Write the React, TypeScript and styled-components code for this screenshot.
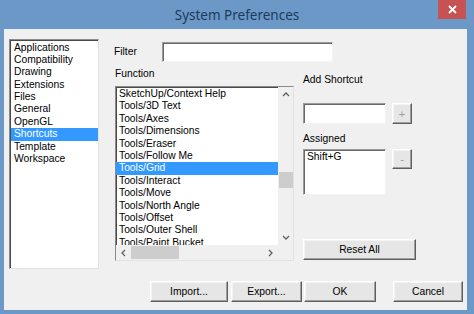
import styled, { createGlobalStyle } from "styled-components";

const GlobalStyle = createGlobalStyle`
  html, body {
    margin: 0;
    padding: 0;
  }
  body {
    width: 474px;
    height: 314px;
    overflow: hidden;
    background: #6b98c6;
    font-family: "Liberation Sans", Arial, sans-serif;
  }
`;

const Window = styled.div`
  width: 474px;
  height: 314px;
  display: flex;
  flex-direction: column;
  background: #6b98c6;
`;

const TitleBar = styled.div`
  position: relative;
  height: 29px;
  display: flex;
  align-items: center;
  justify-content: center;
  font-family: "Noto Sans", "Open Sans", sans-serif;
  font-size: 13.5px;
  color: #1d3a5c;
  padding-top: 1px;
  box-sizing: border-box;
`;

const CloseButton = styled.div`
  position: absolute;
  top: 0;
  right: 8px;
  width: 28px;
  height: 19px;
  background: #c75252;
  color: #fff;
  display: flex;
  align-items: center;
  justify-content: center;
`;

const Panel = styled.div`
  margin: 0 7px 4px 4px;
  height: 281px;
  background: #f0f0f0;
  border-top: 1px solid #e8eef5;
  box-sizing: border-box;
  display: flex;
  flex-direction: column;
  font-size: 10.3px;
  color: #000;
`;

const TopArea = styled.div`
  display: flex;
  padding: 9px 0 0 5px;
`;

const ListBox = styled.div<{ $w: number; $h: number }>`
  width: ${(p) => p.$w}px;
  height: ${(p) => p.$h}px;
  box-sizing: border-box;
  background: #fff;
  border-style: solid;
  border-width: 1px;
  border-color: #8a8a8a #e2e2e2 #e2e2e2 #8a8a8a;
  box-shadow: inset 1px 1px 0 #4a4a4a;
  overflow: hidden;
`;

const Item = styled.div<{ $selected?: boolean }>`
  height: 12.4px;
  line-height: 12.4px;
  padding-left: 3px;
  white-space: nowrap;
  background: ${(p) => (p.$selected ? "#3399ff" : "transparent")};
  color: ${(p) => (p.$selected ? "#fff" : "#000")};
`;

const Items = styled.div`
  padding-top: 1.5px;
  padding-left: 1px;
`;

const RightArea = styled.div`
  display: flex;
  flex-direction: column;
  margin-left: 15px;
`;

const FilterRow = styled.div`
  display: flex;
  align-items: center;
  margin-top: 3px;
  height: 20px;
`;

const Label = styled.div<{ $w?: number }>`
  width: ${(p) => (p.$w ? `${p.$w}px` : "auto")};
  height: 12px;
  line-height: 12px;
  white-space: nowrap;
`;

const TextBox = styled.div<{ $w: number; $h: number }>`
  width: ${(p) => p.$w}px;
  height: ${(p) => p.$h}px;
  box-sizing: border-box;
  background: #fff;
  border-style: solid;
  border-width: 1px;
  border-color: #9a9a9a #f4f4f4 #f4f4f4 #9a9a9a;
  box-shadow: inset 1px 1px 0 #6a6a6a;
  padding: 1px 3px;
  line-height: 12px;
`;

const LowerRow = styled.div`
  display: flex;
  margin-top: 6px;
`;

const FunctionCol = styled.div`
  display: flex;
  flex-direction: column;
  gap: 6px;
  margin-left: 1px;
`;

const FunctionList = styled(ListBox)`
  display: flex;
  flex-direction: column;
`;

const ListBody = styled.div`
  flex: 1;
  display: flex;
  min-height: 0;
`;

const ListItems = styled.div`
  flex: 1;
  overflow: hidden;
  padding-top: 1px;
`;

const VScroll = styled.div`
  width: 15px;
  background: #f0f0f0;
  display: flex;
  flex-direction: column;
  align-items: center;
`;

const HScroll = styled.div`
  height: 15px;
  display: flex;
  background: #f0f0f0;
`;

const HTrack = styled.div`
  flex: 1;
  display: flex;
  align-items: center;
`;

const ArrowCell = styled.div<{ $size: number }>`
  width: ${(p) => p.$size}px;
  height: ${(p) => p.$size}px;
  display: flex;
  align-items: center;
  justify-content: center;
  flex-shrink: 0;
`;

const Thumb = styled.div<{ $w: number; $h: number }>`
  width: ${(p) => p.$w}px;
  height: ${(p) => p.$h}px;
  background: #cdcdcd;
  flex-shrink: 0;
`;

const Spacer = styled.div<{ $size: number }>`
  flex: 0 0 ${(p) => p.$size}px;
`;

const Fill = styled.div`
  flex: 1;
`;

const Corner = styled.div`
  width: 15px;
  background: #f0f0f0;
`;

const ShortcutCol = styled.div`
  display: flex;
  flex-direction: column;
  margin-left: 9px;
  padding-top: 6px;
`;

const InputRow = styled.div`
  display: flex;
  gap: 6px;
`;

const Button = styled.div<{ $w: number; $h?: number }>`
  width: ${(p) => p.$w}px;
  height: ${(p) => p.$h ?? 21}px;
  box-sizing: border-box;
  background: #e6e6e6;
  border-style: solid;
  border-width: 1px;
  border-color: #ffffff #5e5e5e #5e5e5e #ffffff;
  box-shadow: inset -1px -1px 0 #a0a0a0, inset 1px 1px 0 #f4f4f4;
  display: flex;
  align-items: center;
  justify-content: center;
  flex-shrink: 0;
  color: #000;
`;

const SmallButton = styled(Button)`
  color: #9a9a9a;
  font-size: 11px;
`;

const BottomRow = styled.div`
  display: flex;
  margin-top: 12px;
  padding-left: 146px;
`;

const categories = [
  "Applications",
  "Compatibility",
  "Drawing",
  "Extensions",
  "Files",
  "General",
  "OpenGL",
  "Shortcuts",
  "Template",
  "Workspace",
];

const functions = [
  "SketchUp/Context Help",
  "Tools/3D Text",
  "Tools/Axes",
  "Tools/Dimensions",
  "Tools/Eraser",
  "Tools/Follow Me",
  "Tools/Grid",
  "Tools/Interact",
  "Tools/Move",
  "Tools/North Angle",
  "Tools/Offset",
  "Tools/Outer Shell",
  "Tools/Paint Bucket",
];

function Chevron({ dir }: { dir: "up" | "down" | "left" | "right" }) {
  const paths = {
    up: "M1 5 L4 2 L7 5",
    down: "M1 2 L4 5 L7 2",
    left: "M5 1 L2 4 L5 7",
    right: "M2 1 L5 4 L2 7",
  };
  return (
    <svg width="8" height="8" viewBox="0 0 8 8">
      <path d={paths[dir]} fill="none" stroke="#606060" strokeWidth="1.3" />
    </svg>
  );
}

export default function App() {
  return (
    <Window>
      <GlobalStyle />
      <TitleBar>
        System Preferences
        <CloseButton>
          <svg width="9" height="9" viewBox="0 0 9 9">
            <path d="M1 1 L8 8 M8 1 L1 8" stroke="#fff" strokeWidth="1.8" />
          </svg>
        </CloseButton>
      </TitleBar>
      <Panel>
        <TopArea>
          <ListBox $w={90} $h={230}>
            <Items>
              {categories.map((c) => (
                <Item key={c} $selected={c === "Shortcuts"}>
                  {c}
                </Item>
              ))}
            </Items>
          </ListBox>
          <RightArea>
            <FilterRow>
              <Label $w={48}>Filter</Label>
              <TextBox $w={171} $h={20} />
            </FilterRow>
            <LowerRow>
              <FunctionCol>
                <Label>Function</Label>
                <FunctionList $w={179} $h={175}>
                  <ListBody>
                    <ListItems>
                      {functions.map((f) => (
                        <Item key={f} $selected={f === "Tools/Grid"}>
                          {f}
                        </Item>
                      ))}
                    </ListItems>
                    <VScroll>
                      <ArrowCell $size={15}>
                        <Chevron dir="up" />
                      </ArrowCell>
                      <Spacer $size={70} />
                      <Thumb $w={14} $h={16} />
                      <Fill />
                      <ArrowCell $size={15}>
                        <Chevron dir="down" />
                      </ArrowCell>
                    </VScroll>
                  </ListBody>
                  <HScroll>
                    <HTrack>
                      <ArrowCell $size={15}>
                        <Chevron dir="left" />
                      </ArrowCell>
                      <Thumb $w={48} $h={13} />
                      <Fill />
                      <ArrowCell $size={15}>
                        <Chevron dir="right" />
                      </ArrowCell>
                    </HTrack>
                    <Corner />
                  </HScroll>
                </FunctionList>
              </FunctionCol>
              <ShortcutCol>
                <Label>Add Shortcut</Label>
                <Spacer $size={17} />
                <InputRow>
                  <TextBox $w={83} $h={21} />
                  <SmallButton $w={20}>+</SmallButton>
                </InputRow>
                <Spacer $size={9} />
                <Label>Assigned</Label>
                <Spacer $size={4} />
                <InputRow>
                  <TextBox $w={83} $h={46}>Shift+G</TextBox>
                  <SmallButton $w={20} $h={20}>
                    -
                  </SmallButton>
                </InputRow>
                <Spacer $size={44} />
                <Button $w={113}>Reset All</Button>
              </ShortcutCol>
            </LowerRow>
          </RightArea>
        </TopArea>
        <BottomRow>
          <Button $w={78}>Import...</Button>
          <Spacer $size={3} />
          <Button $w={71}>Export...</Button>
          <Spacer $size={2} />
          <Button $w={72}>OK</Button>
          <Spacer $size={17} />
          <Button $w={70}>Cancel</Button>
        </BottomRow>
      </Panel>
    </Window>
  );
}
